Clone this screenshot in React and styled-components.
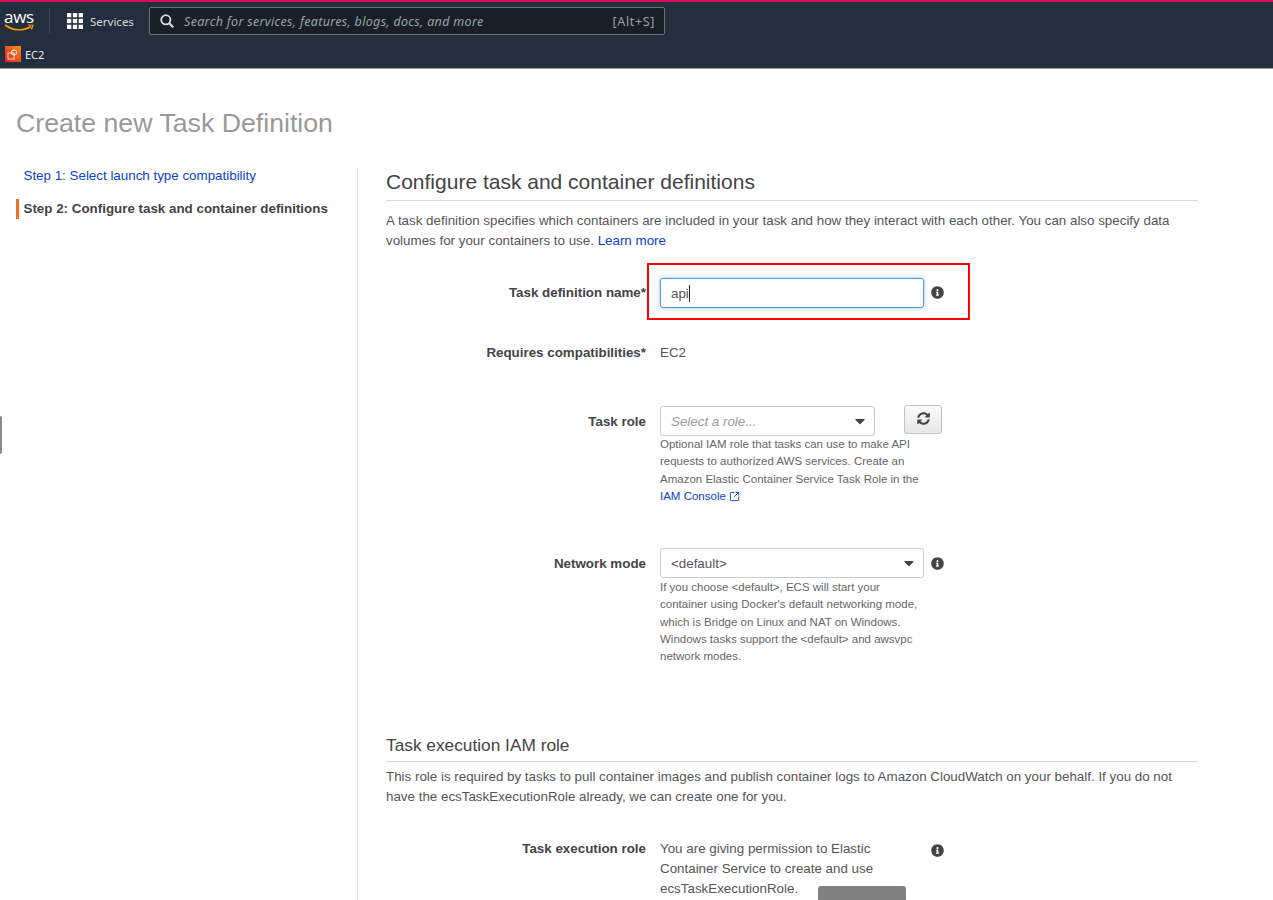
import React from "react";
import styled, { createGlobalStyle } from "styled-components";
import { FaInfoCircle, FaSyncAlt, FaCaretDown } from "react-icons/fa";
import { SquareArrowOutUpRight } from "lucide-react";

const Global = createGlobalStyle`
    html, body {
        margin: 0;
        padding: 0;
        background: #fff;
        font-family: "Liberation Sans", Arial, sans-serif;
        font-size: 13.36px;
        color: #444;
    }
`;

const Root = styled.div`
    position: relative;
    width: 1273px;
    height: 900px;
    overflow: hidden;
`;

const Header = styled.header`
    height: 66px;
    background: #232f3e;
    border-top: 2px solid #d40d57;
    border-bottom: 1px solid #9aa0a6;
    font-family: "Noto Sans", sans-serif;
`;

const TopRow = styled.div`
    display: flex;
    align-items: center;
    height: 38px;
`;

const LogoBox = styled.div`
    position: relative;
    width: 50px;
    height: 26px;
    padding-left: 4px;
    box-sizing: border-box;
    border-right: 1px solid #414b58;
    color: #fff;
    font-family: "Open Sans", sans-serif;
    font-size: 17px;
    line-height: 17px;
    letter-spacing: -0.3px;
`;

const Smile = styled.svg`
    position: absolute;
    left: 4px;
    top: 15px;
`;

const ServicesLink = styled.div`
    display: flex;
    align-items: center;
    gap: 7px;
    margin-left: 17px;
    width: 82px;
    color: #d5dbdb;
    font-size: 11.5px;
`;

const SearchBar = styled.div`
    display: flex;
    align-items: center;
    width: 516px;
    height: 28px;
    box-sizing: border-box;
    padding: 0 9px 0 10px;
    background: #1a1e27;
    border: 1px solid #687078;
    border-radius: 2px;
    color: #95a5a6;
    font-size: 12.5px;
    letter-spacing: 0.32px;
`;

const Placeholder = styled.span`
    flex: 1;
    margin-left: 10px;
    font-style: italic;
`;

const Shortcut = styled.span`
    letter-spacing: 0.65px;
`;

const SubRow = styled.div`
    display: flex;
    align-items: center;
    gap: 4px;
    height: 28px;
    padding-left: 5px;
    color: #eaeded;
    font-size: 11px;
`;

const Title = styled.h1`
    margin: 38px 0 0 16px;
    height: 32px;
    font-size: 26.7px;
    line-height: 32px;
    font-weight: 400;
    color: #999;
`;

const Body = styled.div`
    display: flex;
    margin-top: 29px;
`;

const Sidebar = styled.nav`
    box-sizing: border-box;
    width: 358px;
    height: 740px;
    border-right: 1px solid #e1e4e5;
`;

const Step = styled.div`
    box-sizing: border-box;
    position: relative;
    top: -2px;
    margin: 0 0 13px 16px;
    height: 20px;
    padding-left: ${(p) => (p.$active ? "4.5px" : "7.5px")};
    border-left: ${(p) => (p.$active ? "3px solid #f26f21" : "0")};
    line-height: 20px;
    font-size: 13.36px;
    font-weight: ${(p) => (p.$active ? 700 : 400)};
    color: ${(p) => (p.$active ? "#444" : "#0a3fd0")};
`;

const Main = styled.main`
    width: 812px;
    margin-left: 28px;
`;

const SectionTitle = styled.h2`
    margin: ${(p) => p.$margin || 0};
    padding-bottom: ${(p) => p.$pad};
    font-weight: 400;
    color: #444;
    font-size: ${(p) => p.$size};
    line-height: ${(p) => p.$line};
    border-bottom: 1px solid #d5d8d9;
`;

const Paragraph = styled.p`
    margin: ${(p) => p.$margin};
    font-size: 13.36px;
    line-height: 20px;
    color: #555;
`;

const Link = styled.a`
    color: #0a3fd0;
`;

const FormRow = styled.div`
    display: grid;
    grid-template-columns: 260px 1fr;
    column-gap: 14px;
    margin-top: ${(p) => p.$top};
`;

const Label = styled.div`
    padding-top: ${(p) => p.$shift || 0};
    text-align: right;
    font-weight: 700;
    color: #444;
    font-size: 13.36px;
    line-height: ${(p) => p.$line || "30px"};
`;

const Field = styled.div`
    display: flex;
    align-items: center;
`;

const TextInput = styled.div`
    box-sizing: border-box;
    display: flex;
    align-items: center;
    width: 264px;
    height: 30px;
    padding-left: 10px;
    background: #fff;
    border: 1px solid #5b9ad9;
    border-radius: 3px;
    box-shadow: 0 0 4px rgba(82, 153, 230, 0.6);
    color: #555;
`;

const Caret = styled.span`
    width: 1px;
    height: 17px;
    background: #222;
`;

const RedBox = styled.div`
    position: absolute;
    left: -13px;
    top: -15px;
    width: 323px;
    height: 57px;
    box-sizing: border-box;
    border: 2px solid #f00;
    pointer-events: none;
`;

const InputWrap = styled.div`
    position: relative;
    display: flex;
    align-items: center;
`;

const InfoIcon = styled(FaInfoCircle)`
    margin-left: ${(p) => p.$left || "7px"};
    margin-bottom: ${(p) => p.$raise || 0};
    width: 13px;
    height: 13px;
    color: #444;
`;

const StaticValue = styled.div`
    line-height: 30px;
    color: #555;
`;

const SelectBox = styled.div`
    box-sizing: border-box;
    display: flex;
    align-items: center;
    justify-content: space-between;
    width: ${(p) => p.$width};
    height: 30px;
    padding: 0 6px 0 10px;
    background: #fff;
    border: 1px solid #ccc;
    border-radius: 3px;
    color: ${(p) => (p.$empty ? "#999" : "#555")};
    font-style: ${(p) => (p.$empty ? "italic" : "normal")};
`;

const Refresh = styled.button`
    display: flex;
    align-items: center;
    justify-content: center;
    width: 38px;
    height: 29px;
    margin: -3px 0 0 29px;
    padding: 0 0 2px;
    background: linear-gradient(#fafafa, #e6e6e6);
    border: 1px solid #c4c4c4;
    border-radius: 3px;
    color: #444;
`;

const Help = styled.div`
    width: 264px;
    margin-top: ${(p) => p.$top};
    font-size: 11.5px;
    line-height: 17.3px;
    color: #666;
`;

const HelpLink = styled.a`
    display: inline-flex;
    align-items: center;
    gap: 3px;
    color: #0a3fd0;
`;

const RoleText = styled.div`
    width: 256px;
    font-size: 13.36px;
    line-height: 20px;
    color: #555;
`;

const RoleRow = styled.div`
    display: flex;
    align-items: flex-start;
`;

const RoleInfo = styled.span`
    display: flex;
    height: 24px;
    align-items: center;
    margin-left: 15px;
`;

const SideHandle = styled.div`
    position: absolute;
    left: 0;
    top: 416px;
    width: 2px;
    height: 38px;
    background: #8a8a8a;
    border-radius: 0 2px 2px 0;
`;

const FloatButton = styled.div`
    position: absolute;
    left: 818px;
    top: 886px;
    width: 88px;
    height: 30px;
    background: #808080;
    border-radius: 3px;
`;

function GridIcon() {
    const cells = [];
    for (let y = 0; y < 3; y++) {
        for (let x = 0; x < 3; x++) {
            cells.push(<rect key={x + "-" + y} x={x * 6} y={y * 6} width="4.4" height="4.4" fill="#fff" />);
        }
    }
    return <svg width="16" height="16" viewBox="0 0 16.4 16.4">{cells}</svg>;
}

function SearchIcon() {
    return (
        <svg width="14" height="14" viewBox="0 0 14 14" fill="none" stroke="#d5dbdb" strokeWidth="1.8">
            <circle cx="5.8" cy="5.8" r="4.6" />
            <path d="M9.2 9.2 L13.2 13.2" strokeWidth="2.2" />
        </svg>
    );
}

function Ec2Icon() {
    return (
        <svg width="16" height="16" viewBox="0 0 16 16">
            <defs>
                <linearGradient id="ec2" x1="0" y1="1" x2="1" y2="0">
                    <stop offset="0" stopColor="#e0201a" />
                    <stop offset="1" stopColor="#f78e1e" />
                </linearGradient>
            </defs>
            <rect width="16" height="16" fill="url(#ec2)" />
            <rect x="3" y="7" width="6" height="6" fill="none" stroke="#fff" strokeWidth="1" opacity="0.8" />
            <circle cx="9" cy="6.5" r="2.6" fill="none" stroke="#fff" strokeWidth="1" />
        </svg>
    );
}

export default function App() {
    return (
        <Root>
            <Global />
            <Header>
                <TopRow>
                    <LogoBox>
                        aws
                        <Smile width="32" height="10" viewBox="0 0 32 10" fill="none">
                            <path d="M1 2 C9 8 20 8 27 3.5" stroke="#f90" strokeWidth="1.6" />
                            <path d="M24 2 L29 2.2 L27.4 6.5" stroke="#f90" strokeWidth="1.2" />
                        </Smile>
                    </LogoBox>
                    <ServicesLink>
                        <GridIcon />
                        Services
                    </ServicesLink>
                    <SearchBar>
                        <SearchIcon />
                        <Placeholder>Search for services, features, blogs, docs, and more</Placeholder>
                        <Shortcut>[Alt+S]</Shortcut>
                    </SearchBar>
                </TopRow>
                <SubRow>
                    <Ec2Icon />
                    EC2
                </SubRow>
            </Header>

            <Title>Create new Task Definition</Title>

            <Body>
                <Sidebar>
                    <Step>Step 1: Select launch type compatibility</Step>
                    <Step $active>Step 2: Configure task and container definitions</Step>
                </Sidebar>
                <Main>
                    <SectionTitle $size="21px" $line="28px" $pad="4px">Configure task and container definitions</SectionTitle>
                    <Paragraph $margin="10px 0 0">
                        A task definition specifies which containers are included in your task and how they interact with each other. You can also specify data volumes for your containers to use. <Link>Learn more</Link>
                    </Paragraph>

                    <FormRow $top="27px">
                        <Label>Task definition name*</Label>
                        <Field>
                            <InputWrap>
                                <TextInput>api<Caret /></TextInput>
                                <RedBox />
                            </InputWrap>
                            <InfoIcon $raise="2px" />
                        </Field>
                    </FormRow>

                    <FormRow $top="30px">
                        <Label>Requires compatibilities*</Label>
                        <StaticValue>EC2</StaticValue>
                    </FormRow>

                    <FormRow $top="38px">
                        <Label $shift="1px">Task role</Label>
                        <div>
                            <Field>
                                <SelectBox $width="215px" $empty>
                                    Select a role...
                                    <FaCaretDown size={16} color="#444" />
                                </SelectBox>
                                <Refresh><FaSyncAlt size={13} /></Refresh>
                            </Field>
                            <Help $top="0">
                                Optional IAM role that tasks can use to make API requests to authorized AWS services. Create an Amazon Elastic Container Service Task Role in the <HelpLink>IAM Console <SquareArrowOutUpRight size={11} /></HelpLink>
                            </Help>
                        </div>
                    </FormRow>

                    <FormRow $top="43px">
                        <Label $shift="1px">Network mode</Label>
                        <div>
                            <Field>
                                <SelectBox $width="264px">
                                    &lt;default&gt;
                                    <FaCaretDown size={16} color="#444" />
                                </SelectBox>
                                <InfoIcon />
                            </Field>
                            <Help $top="1px">
                                If you choose &lt;default&gt;, ECS will start your container using Docker's default networking mode, which is Bridge on Linux and NAT on Windows. Windows tasks support the &lt;default&gt; and awsvpc network modes.
                            </Help>
                        </div>
                    </FormRow>

                    <SectionTitle as="h3" $margin="71px 0 0" $size="17.3px" $line="16px" $pad="8px">Task execution IAM role</SectionTitle>
                    <Paragraph $margin="5px 0 0">
                        This role is required by tasks to pull container images and publish container logs to Amazon CloudWatch on your behalf. If you do not have the ecsTaskExecutionRole already, we can create one for you.
                    </Paragraph>

                    <FormRow $top="32px">
                        <Label $line="20px">Task execution role</Label>
                        <RoleRow>
                            <RoleText>You are giving permission to Elastic Container Service to create and use ecsTaskExecutionRole.</RoleText>
                            <RoleInfo><InfoIcon $left="0" /></RoleInfo>
                        </RoleRow>
                    </FormRow>
                </Main>
            </Body>

            <SideHandle />
            <FloatButton />
        </Root>
    );
}
